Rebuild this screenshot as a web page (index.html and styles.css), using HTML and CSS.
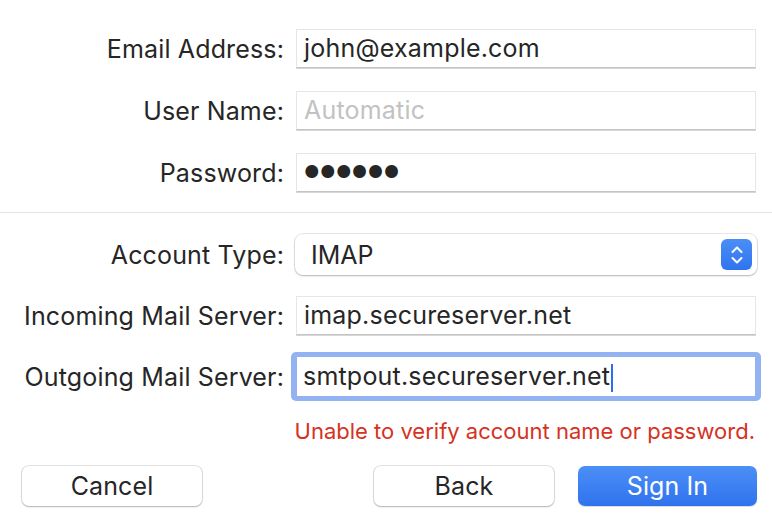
FILE: index.html
```html
<!DOCTYPE html>
<html>
<head>
<meta charset="utf-8">
<link rel="stylesheet" href="styles.css">
</head>
<body>
<div class="sheet">
  <div class="rows top">
    <div class="row"><label class="lbl">Email Address:</label><div class="field">john@example.com</div></div>
    <div class="row"><label class="lbl">User Name:</label><div class="field placeholder">Automatic</div></div>
    <div class="row"><label class="lbl">Password:</label><div class="field dots">●●●●●●</div></div>
  </div>
  <div class="divider"></div>
  <div class="rows bottom">
    <div class="row popup-row"><label class="lbl">Account Type:</label>
      <div class="popup"><span>IMAP</span>
        <span class="stepper"><svg width="14" height="22" viewBox="0 0 14 22"><path d="M2.5 8 L7 3.5 L11.5 8 M2.5 14 L7 18.5 L11.5 14" fill="none" stroke="#fff" stroke-width="2" stroke-linecap="round" stroke-linejoin="round"/></svg></span>
      </div>
    </div>
    <div class="row in-row"><label class="lbl">Incoming Mail Server:</label><div class="field">imap.secureserver.net</div></div>
    <div class="row out-row"><label class="lbl">Outgoing Mail Server:</label><div class="ring"><div class="field focused">smtpout.secureserver.net<span class="caret"></span></div></div></div>
  </div>
  <div class="error">Unable to verify account name or password.</div>
  <div class="buttons">
    <button class="btn">Cancel</button>
    <div class="right">
      <button class="btn">Back</button>
      <button class="btn primary">Sign In</button>
    </div>
  </div>
</div>
</body>
</html>
```
FILE: styles.css
```css
html, body { margin: 0; padding: 0; background: #fff; }
body { font-family: "Inter", "Liberation Sans", sans-serif; color: #262626; width: 772px; height: 518px; overflow: hidden; }
.sheet { padding-top: 29px; }
.rows { display: flex; flex-direction: column; }
.top { gap: 23px; }
.row { display: grid; grid-template-columns: 284px 460px; column-gap: 12px; align-items: center; height: 39px; }
.lbl { text-align: right; font-size: 25px; letter-spacing: 0.15px; color: #262626; white-space: nowrap; }
.field { box-sizing: border-box; height: 39px; border: 1px solid #e6e6e6; border-bottom-color: #c4c4c4; box-shadow: 0 1px 0 #d6d6d6; background: #fff; padding: 0 7px; font-size: 25px; line-height: 37px; letter-spacing: 0.2px; color: #262626; white-space: nowrap; }
.placeholder { color: #c2c2c2; }
.dots { font-size: 17px; letter-spacing: 0.4px; padding-left: 7px; }
.divider { height: 1px; background: #e2e2e2; margin: 20px 0 21px; }
.popup-row { height: 41px; margin-bottom: 21px; }
.in-row { margin-bottom: 17px; }
.out-row { height: 49px; }
.popup { box-sizing: border-box; height: 41px; margin-left: -1px; width: 462px; border-radius: 8px; background: #fff; box-shadow: 0 0 0 1px rgba(0,0,0,0.09), 0 1px 2px rgba(0,0,0,0.22); display: flex; align-items: center; justify-content: space-between; padding: 0 5px 0 16px; font-size: 25px; }
.stepper { width: 31px; height: 31px; border-radius: 6px; background: linear-gradient(#4b8ef7, #2f74ef); display: flex; align-items: center; justify-content: center; }
.ring { margin-left: -5px; width: 470px; height: 49px; box-sizing: border-box; padding: 5px 6px; border-radius: 5px; background: #92b2f1; }
.focused { height: 39px; border: none; box-shadow: none; line-height: 39px; padding-left: 6px; }
.caret { display: inline-block; width: 2px; height: 28px; background: #2f6df0; vertical-align: -7px; margin-left: 1px; }
.error { color: #d6321e; font-size: 22px; line-height: 26px; text-align: right; padding-right: 17px; margin-top: 17px; letter-spacing: 0; }
.buttons { display: flex; justify-content: space-between; padding: 0 15px 0 22px; margin-top: 22px; }
.right { display: flex; gap: 24px; }
.btn { box-sizing: border-box; width: 180px; height: 40px; border: none; border-radius: 7px; background: #fff; box-shadow: 0 0 0 1px rgba(0,0,0,0.1), 0 1px 2px rgba(0,0,0,0.22); font-family: "Inter", "Liberation Sans", sans-serif; font-size: 25px; letter-spacing: 0.1px; color: #262626; padding: 0; }
.primary { background: linear-gradient(#4c8ff6, #2f72ee); color: #fff; box-shadow: 0 1px 1px rgba(0,0,0,0.15); width: 179px; }
```
